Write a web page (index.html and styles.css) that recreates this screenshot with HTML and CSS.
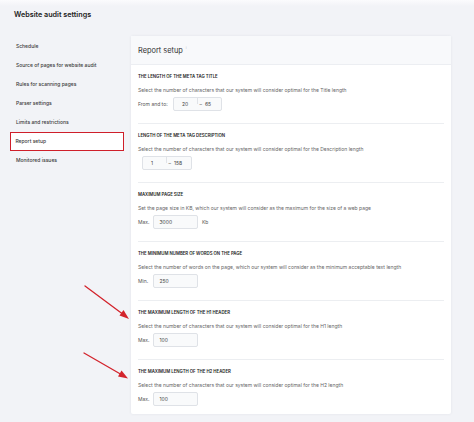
FILE: index.html
```html
<!DOCTYPE html>
<html>
<head>
<meta charset="utf-8">
<link rel="stylesheet" href="styles.css">
</head>
<body>
<div class="page">
  <header class="top">Website audit settings</header>
  <div class="main">
    <nav class="side">
      <div class="item">Schedule</div>
      <div class="item">Source of pages for website audit</div>
      <div class="item">Rules for scanning pages</div>
      <div class="item">Parser settings</div>
      <div class="item">Limits and restrictions</div>
      <div class="item active">Report setup</div>
      <div class="item">Monitored issues</div>
    </nav>
    <section class="card">
      <div class="card-head">Report setup <span class="info">i</span></div>
      <div class="card-body">
        <div class="sec">
          <div class="lbl">THE LENGTH OF THE META TAG TITLE</div>
          <div class="desc">Select the number of characters that our system will consider optimal for the Title length</div>
          <div class="row">
            <span class="pre wide">From and to:</span>
            <span class="range"><span class="n1">20</span><span class="tick"></span><span class="dash">–</span><span class="n2">65</span></span>
          </div>
        </div>
        <div class="sec">
          <div class="lbl">LENGTH OF THE META TAG DESCRIPTION</div>
          <div class="desc">Select the number of characters that our system will consider optimal for the Description length</div>
          <div class="row">
            <span class="range r2"><span class="n1">1</span><span class="tick"></span><span class="dash">–</span><span class="n2">158</span></span>
          </div>
        </div>
        <div class="sec">
          <div class="lbl">MAXIMUM PAGE SIZE</div>
          <div class="desc">Set the page size in KB, which our system will consider as the maximum for the size of a web page</div>
          <div class="row">
            <span class="pre">Max.</span>
            <span class="box">3000</span>
            <span class="post">Kb</span>
          </div>
        </div>
        <div class="sec">
          <div class="lbl">THE MINIMUM NUMBER OF WORDS ON THE PAGE</div>
          <div class="desc">Select the number of words on the page, which our system will consider as the minimum acceptable text length</div>
          <div class="row">
            <span class="pre">Min.</span>
            <span class="box">250</span>
          </div>
        </div>
        <div class="sec">
          <div class="lbl">THE MAXIMUM LENGTH OF THE H1 HEADER</div>
          <div class="desc">Select the number of characters that our system will consider optimal for the H1 length</div>
          <div class="row">
            <span class="pre">Max.</span>
            <span class="box">100</span>
          </div>
        </div>
        <div class="sec last">
          <div class="lbl">THE MAXIMUM LENGTH OF THE H2 HEADER</div>
          <div class="desc">Select the number of characters that our system will consider optimal for the H2 length</div>
          <div class="row">
            <span class="pre">Max.</span>
            <span class="box">100</span>
          </div>
        </div>
      </div>
    </section>
  </div>
  <svg class="arrows" width="474" height="422" viewBox="0 0 474 422">
    <g stroke="#d3232c" stroke-width="1.3" fill="#d3232c" stroke-linecap="round">
      <line x1="85" y1="286" x2="124" y2="315"/>
      <polygon points="129,319 119.5,315.5 123.5,310" stroke="none"/>
      <line x1="84" y1="353" x2="123" y2="375.5"/>
      <polygon points="128,378.5 118,376.5 121.5,370.5" stroke="none"/>
    </g>
  </svg>
</div>
</body>
</html>
```
FILE: styles.css
```css
* { box-sizing: border-box; }
html, body { margin: 0; padding: 0; }
body {
  width: 474px;
  height: 422px;
  overflow: hidden;
  font-family: Inter, "Noto Sans", sans-serif;
  background: linear-gradient(#fbfbfd 0, #f2f3f7 6px);
  color: #333;
}
.page { position: relative; width: 474px; height: 422px; }
.top {
  height: 30px;
  padding: 10px 0 0 14px;
  font-size: 7.2px;
  font-weight: 600;
  line-height: 10px;
  color: #222;
}
.main {
  display: flex;
  align-items: flex-start;
  padding-top: 6px;
}
.side {
  width: 131px;
  padding: 0.5px 0 0 10px;
  display: flex;
  flex-direction: column;
}
.item {
  width: 114px;
  height: 19px;
  padding-left: 6px;
  display: flex;
  align-items: center;
  font-size: 5px;
  font-weight: 500;
  color: #3a3a3a;
}
.item.active {
  border: 1.6px solid #cf1f2a;
  padding-left: 4.4px;
  background: #fff;
}
.card {
  width: 320px;
  background: #fff;
  box-shadow: 0 0 3px rgba(40, 50, 80, 0.08);
  border-radius: 2px;
}
.card-head {
  height: 29px;
  padding-left: 7px;
  display: flex;
  align-items: center;
  background: #f8f9fb;
  border-bottom: 1px solid #eceef2;
  font-size: 7.4px;
  color: #333;
}
.info {
  font-size: 3.5px;
  color: #bbb;
  margin-left: 3px;
  margin-top: -5px;
}
.card-body { padding: 0 7px; }
.sec {
  padding: 8.5px 0 12.5px;
  border-bottom: 1px solid #eceef1;
}
.sec.last { border-bottom: none; padding-bottom: 8px; }
.lbl {
  font-size: 4.3px;
  line-height: 6px;
  font-weight: 600;
  color: #222;
}
.desc {
  margin-top: 6.5px;
  font-size: 5px;
  line-height: 8px;
  color: #666;
}
.row {
  margin-top: 2.5px;
  height: 14px;
  display: flex;
  align-items: center;
  font-size: 5px;
  color: #555;
}
.pre { width: 15px; }
.pre.wide { width: 35px; }
.post { margin-left: 4px; }
.box {
  width: 45px;
  height: 14px;
  border: 1px solid #dfe2e7;
  border-radius: 2px;
  background: #f9fafb;
  display: flex;
  align-items: center;
  padding-left: 5.5px;
  color: #444;
}
.range {
  width: 49px;
  height: 14px;
  border: 1px solid #dfe2e7;
  border-radius: 2px;
  background: #f9fafb;
  display: flex;
  align-items: center;
  color: #444;
}
.range.r2 { margin-left: 4px; width: 50px; }
.n1 { width: 23px; padding-left: 8px; }
.tick {
  align-self: flex-start;
  width: 1px;
  height: 6px;
  background: #e1e3e7;
}
.dash { margin-left: 1.5px; }
.n2 { margin-left: 3px; }
.arrows { position: absolute; left: 0; top: 0; pointer-events: none; }
```
